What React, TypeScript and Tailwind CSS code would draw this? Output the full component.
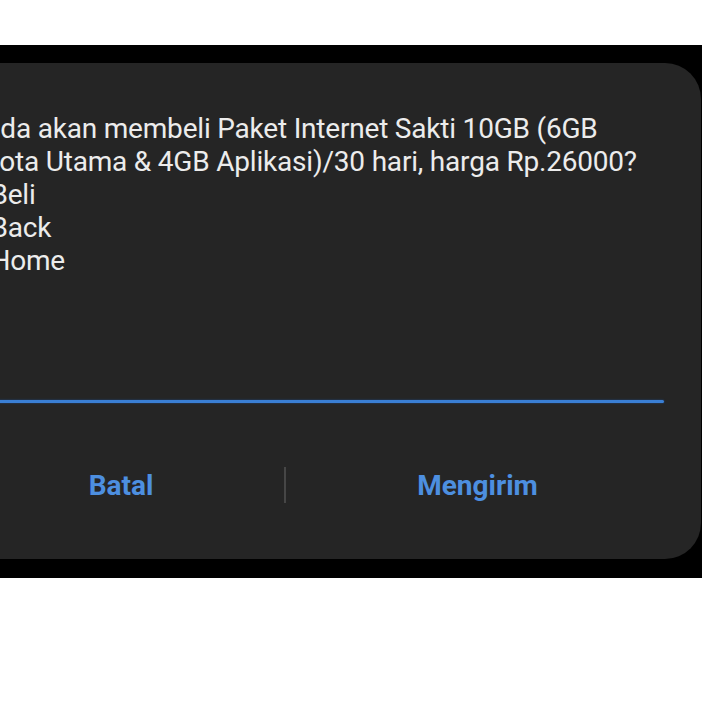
const message = [
  'Anda akan membeli Paket Internet Sakti 10GB (6GB',
  'Kuota Utama & 4GB Aplikasi)/30 hari, harga Rp.26000?',
];

const options = ['1. Beli', '0. Back', '9. Home'];

function UssdDialog() {
  return (
    <div className="ml-[-60px] h-[496px] w-[761px] rounded-[36px] bg-[#252525] pt-[49px]">
      <div className="pl-[27px] pr-[37px] text-[28px] leading-[33px] tracking-[-0.2px] text-[#ececec]">
        {message.map((line) => (
          <div key={line} className="whitespace-nowrap">
            {line}
          </div>
        ))}
        {options.map((opt) => (
          <div key={opt} className="ml-[-6px] whitespace-nowrap">
            {opt}
          </div>
        ))}
      </div>

      {/* empty reply field, only the focused underline shows */}
      <div className="ml-[27px] mr-[37px] mt-[123px] h-[3px] rounded-full bg-[#3a7fd4] shadow-[0_0_2px_#1f4f8f]" />

      <div className="mt-[46px] flex h-[72px] items-center pl-[18px] text-[28px] font-bold leading-[33px] text-[#4d8fe0]">
        <button className="w-[326px] text-center">Batal</button>
        <div className="h-[36px] w-[2px] bg-[#464646]" />
        <button className="w-[383px] text-center">Mengirim</button>
      </div>
    </div>
  );
}

export default function App() {
  return (
    <div className="h-[702px] w-[702px] overflow-hidden bg-white font-['Roboto',sans-serif]">
      <div className="mt-[45px] h-[533px] bg-black pt-[18px]">
        <UssdDialog />
      </div>
    </div>
  );
}
